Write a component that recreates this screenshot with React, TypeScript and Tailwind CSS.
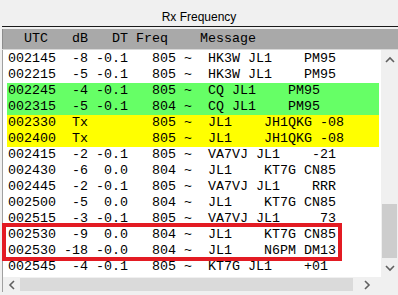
const rows: { text: string; bg?: string }[] = [
  { text: '002145  -8 -0.1   805 ~  HK3W JL1    PM95' },
  { text: '002215  -5 -0.1   805 ~  HK3W JL1    PM95' },
  { text: '002245  -4 -0.1   805 ~  CQ JL1    PM95', bg: 'green' },
  { text: '002315  -5 -0.1   804 ~  CQ JL1    PM95', bg: 'green' },
  { text: '002330  Tx        805 ~  JL1    JH1QKG -08', bg: 'yellow' },
  { text: '002400  Tx        805 ~  JL1    JH1QKG -08', bg: 'yellow' },
  { text: '002415  -2 -0.1   805 ~  VA7VJ JL1    -21' },
  { text: '002430  -6  0.0   804 ~  JL1    KT7G CN85' },
  { text: '002445  -2 -0.1   805 ~  VA7VJ JL1    RRR' },
  { text: '002500  -5  0.0   804 ~  JL1    KT7G CN85' },
  { text: '002515  -3 -0.1   805 ~  VA7VJ JL1     73' },
  { text: '002530  -9  0.0   804 ~  JL1    KT7G CN85' },
  { text: '002530 -18 -0.0   804 ~  JL1    N6PM DM13' },
  { text: '002545  -4 -0.1   805 ~  KT7G JL1    +01' },
];

function Chevron({ dir }: { dir: 'up' | 'down' | 'left' | 'right' }) {
  const paths = {
    up: 'M1 6 L5 2 L9 6',
    down: 'M1 2 L5 6 L9 2',
    left: 'M6 1 L2 5 L6 9',
    right: 'M2 1 L6 5 L2 9',
  };
  const vertical = dir === 'up' || dir === 'down';
  return (
    <svg
      width={vertical ? 10 : 8}
      height={vertical ? 8 : 10}
      viewBox={vertical ? '0 0 10 8' : '0 0 8 10'}
      fill="none"
      stroke="#606060"
      strokeWidth="1.6"
    >
      <path d={paths[dir]} />
    </svg>
  );
}

export default function App() {
  return (
    <div className="w-[398px] h-[295px] overflow-hidden bg-[#f0f0f0] flex flex-col">
      <div className="h-[26px] shrink-0 pt-[10px] text-center text-[12px] leading-[14px] text-black font-['Liberation_Sans',Arial,sans-serif]">
        Rx Frequency
      </div>
      <div className="ml-[2px] h-px shrink-0 bg-[#1a1a1a]" />
      <div className="ml-[2px] mt-[2px] flex flex-col font-['Liberation_Mono','Courier_New',monospace] text-[13.33px] text-black">
        <div className="h-[20px] bg-[#a9a9a9] border-l border-[#8c8c8c] pl-[5px] leading-[20px] whitespace-pre">
          {'  UTC   dB   DT Freq    Message'}
        </div>
        <div className="h-px bg-[#d8d8d8]" />
        <div className="flex h-[227px]">
          <div className="relative flex-1 min-w-0 bg-white border-l border-[#a0a0a0] pl-[4px] pr-[2px] pt-px">
            {rows.map((r, i) => (
              <div
                key={i}
                className={
                  'h-[16px] leading-[16px] pl-px whitespace-pre overflow-hidden ' +
                  (r.bg === 'green' ? 'bg-[#66ff66]' : r.bg === 'yellow' ? 'bg-[#ffff00]' : '')
                }
              >
                {r.text}
              </div>
            ))}
            <div className="absolute left-[-1px] top-[173px] w-[340px] h-[38px] border-[4px] border-[#e31b23]" />
          </div>
          <div className="w-[17px] shrink-0 bg-[#f0f0f0] flex flex-col items-center">
            <div className="h-[18px] mt-px flex items-center justify-center">
              <Chevron dir="up" />
            </div>
            <div className="flex-1 w-full px-[1px] flex flex-col">
              <div className="h-[135px]" />
              <div className="h-[54px] bg-[#cdcdcd]" />
            </div>
            <div className="h-[18px] flex items-center justify-center">
              <Chevron dir="down" />
            </div>
          </div>
        </div>
        <div className="flex h-[15px]">
          <div className="flex-1 min-w-0 flex items-center border-l border-[#a0a0a0]">
            <div className="w-[17px] flex justify-center">
              <Chevron dir="left" />
            </div>
            <div className="flex-1 h-[13px] bg-[#dadada]" />
            <div className="w-[28px] flex justify-center">
              <Chevron dir="right" />
            </div>
          </div>
          <div className="w-[17px] shrink-0 bg-[#f0f0f0]" />
        </div>
      </div>
    </div>
  );
}
